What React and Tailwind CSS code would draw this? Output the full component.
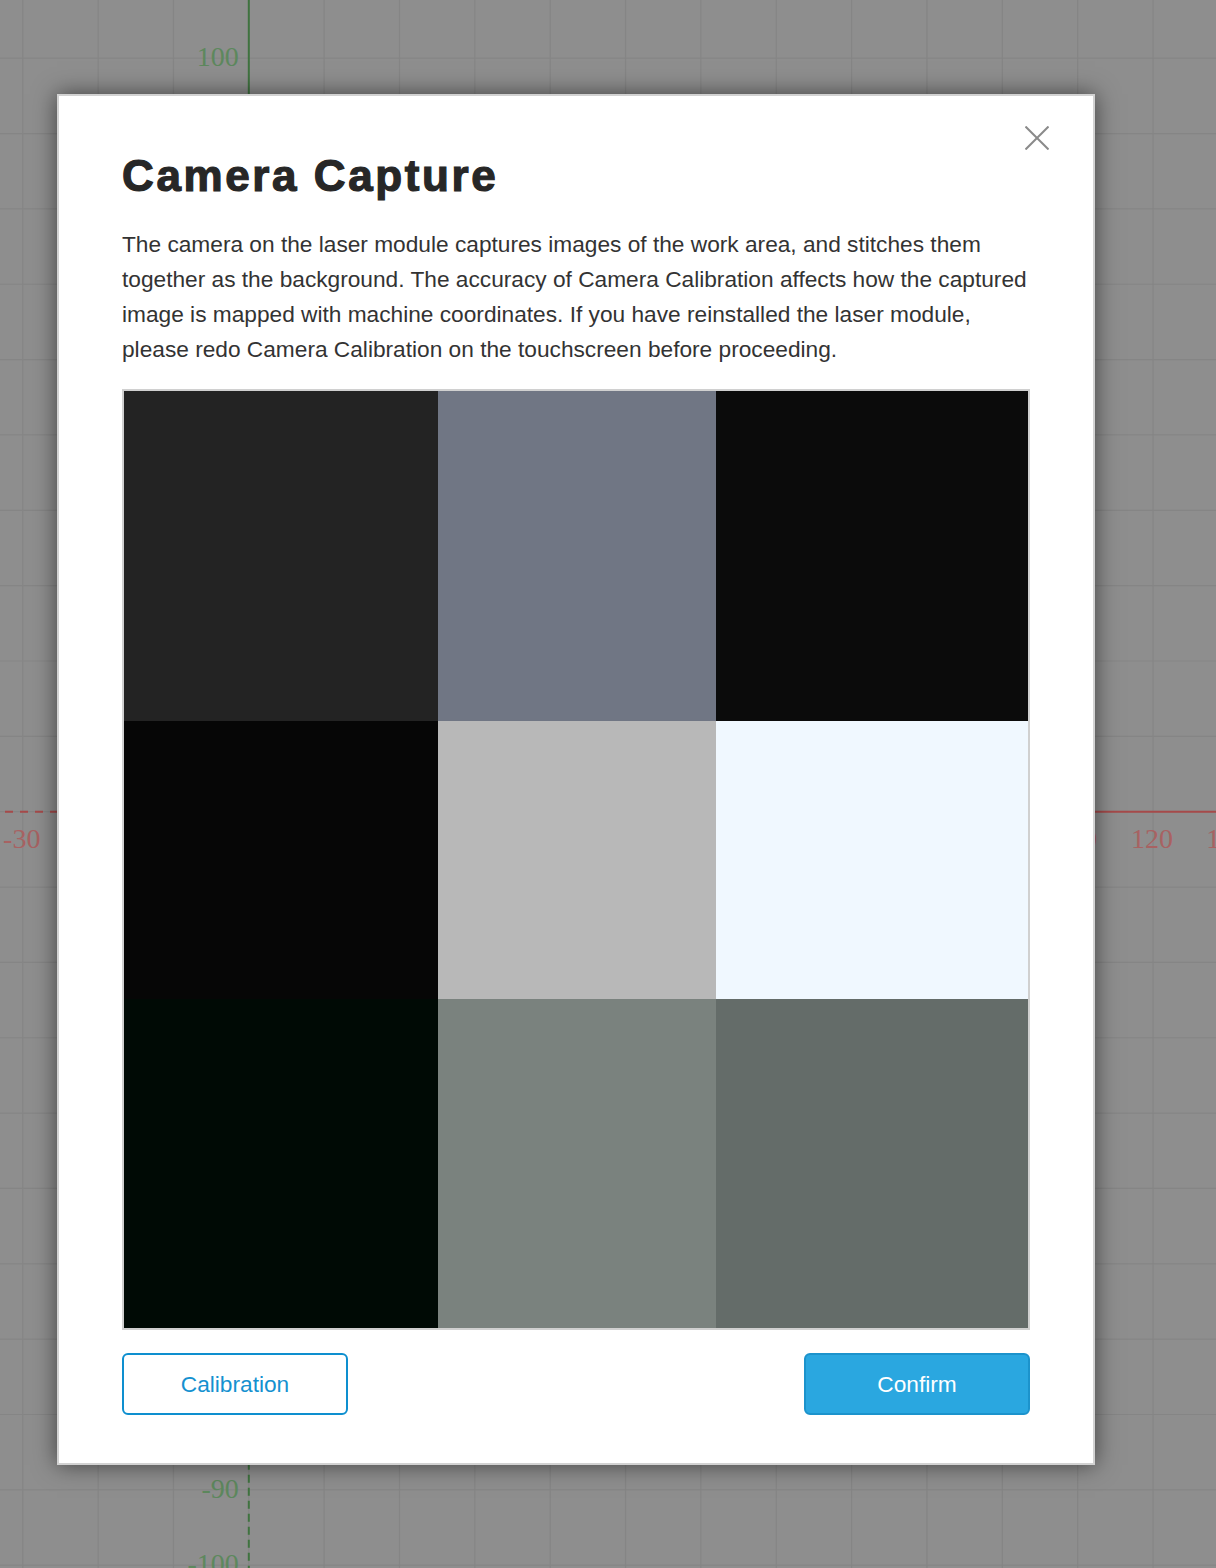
import React from "react";

const STEP = 75.35;
const X0 = 248.8;
const Y0 = 811.7;

function Canvas() {
  const vx = [];
  for (let k = -4; k <= 14; k++) vx.push(X0 + k * STEP);
  const hy = [];
  for (let k = -12; k <= 11; k++) hy.push(Y0 + k * STEP);
  const serif = "'Liberation Serif', 'Times New Roman', serif";
  return (
    <svg className="absolute inset-0" width="1216" height="1568" viewBox="0 0 1216 1568">
      <rect x="0" y="0" width="1216" height="1568" fill="#8e8e8e" />
      {vx.map((x, i) => (
        <line key={"v" + i} x1={x} y1="0" x2={x} y2="1568" stroke="#858585" strokeWidth="1.2" />
      ))}
      {hy.map((y, i) => (
        <line key={"h" + i} x1="0" y1={y} x2="1216" y2={y} stroke="#858585" strokeWidth="1.2" />
      ))}
      <line x1={X0} y1="0" x2={X0} y2={Y0} stroke="#3f733f" strokeWidth="2" />
      <line x1={X0} y1={Y0} x2={X0} y2="1568" stroke="#3f733f" strokeWidth="2" strokeDasharray="8 5" />
      <line x1={X0} y1={Y0} x2="1216" y2={Y0} stroke="#a64a4a" strokeWidth="2" />
      <line x1="0" y1={Y0} x2={X0} y2={Y0} stroke="#a64a4a" strokeWidth="2" strokeDasharray="8 7" strokeDashoffset="-5" />
      {[100, 90, 80, 70, 60, 50, 40, 30, 20, 10, -10, -20, -30, -40, -50, -60, -70, -80, -90, -100].map((v) => (
        <text
          key={"yl" + v}
          x={X0 - 10}
          y={Y0 - (v / 10) * STEP + 8}
          textAnchor="end"
          fontFamily={serif}
          fontSize="28"
          fill="#5d885d"
        >
          {v}
        </text>
      ))}
      {[-30, -20, -10, 10, 20, 30, 40, 50, 60, 70, 80, 90, 100, 110, 120, 130].map((v) => (
        <text
          key={"xl" + v}
          x={X0 + (v / 10) * STEP - 1}
          y={Y0 + 36}
          textAnchor="middle"
          fontFamily={serif}
          fontSize="28"
          fill="#a86262"
        >
          {v}
        </text>
      ))}
    </svg>
  );
}

export default function App() {
  const sans = "font-['Liberation_Sans',Arial,sans-serif]";
  return (
    <div className="relative w-[1216px] h-[1568px] overflow-hidden bg-[#8e8e8e]">
      <Canvas />
      <div className="relative z-10 pt-[94px] pl-[57px]">
        <div
          className={`relative w-[1038px] border-2 border-[#d2d2d2] bg-white pt-[58px] pb-[48px] px-[63px] shadow-[0_0_22px_rgba(0,0,0,0.55)] ${sans}`}
        >
          <button className="absolute top-[30px] right-[44px] w-[24px] h-[24px]" aria-label="Close">
            <svg width="24" height="24" viewBox="0 0 24 24">
              <line x1="0.5" y1="0.5" x2="23.5" y2="23.5" stroke="#8a8a8a" strokeWidth="2" />
              <line x1="23.5" y1="0.5" x2="0.5" y2="23.5" stroke="#8a8a8a" strokeWidth="2" />
            </svg>
          </button>
          <h1 className="text-[44px] leading-[44px] font-bold text-[#272727] tracking-[2.6px] [-webkit-text-stroke:1.2px_#272727]">
            Camera Capture
          </h1>
          <p className="mt-[29px] text-[22.7px] leading-[35px] text-[#333333] whitespace-nowrap">
            The camera on the laser module captures images of the work area, and stitches them
            <br />
            together as the background. The accuracy of Camera Calibration affects how the captured
            <br />
            image is mapped with machine coordinates. If you have reinstalled the laser module,
            <br />
            please redo Camera Calibration on the touchscreen before proceeding.
          </p>
          <div className="mt-[22px] border-2 border-[#d0d0d0]">
            <div className="grid grid-cols-[314px_278px_312px] grid-rows-[330px_278px_329px]">
              <div className="bg-[#232323]" />
              <div className="bg-[#707684]" />
              <div className="bg-[#0b0b0b]" />
              <div className="bg-[#060606]" />
              <div className="bg-[#b8b8b8]" />
              <div className="bg-[#f0f8ff]" />
              <div className="bg-[#000a05]" />
              <div className="bg-[#7a827e]" />
              <div className="bg-[#646c69]" />
            </div>
          </div>
          <div className="mt-[23px] flex justify-between">
            <button className="w-[226px] h-[62px] rounded-[6px] border-2 border-[#0e8fcf] bg-white text-[22.7px] text-[#1591d0]">
              Calibration
            </button>
            <button className="w-[226px] h-[62px] rounded-[6px] border-2 border-[#1c93cc] bg-[#2aa7e0] text-[22.7px] text-white">
              Confirm
            </button>
          </div>
        </div>
      </div>
    </div>
  );
}
